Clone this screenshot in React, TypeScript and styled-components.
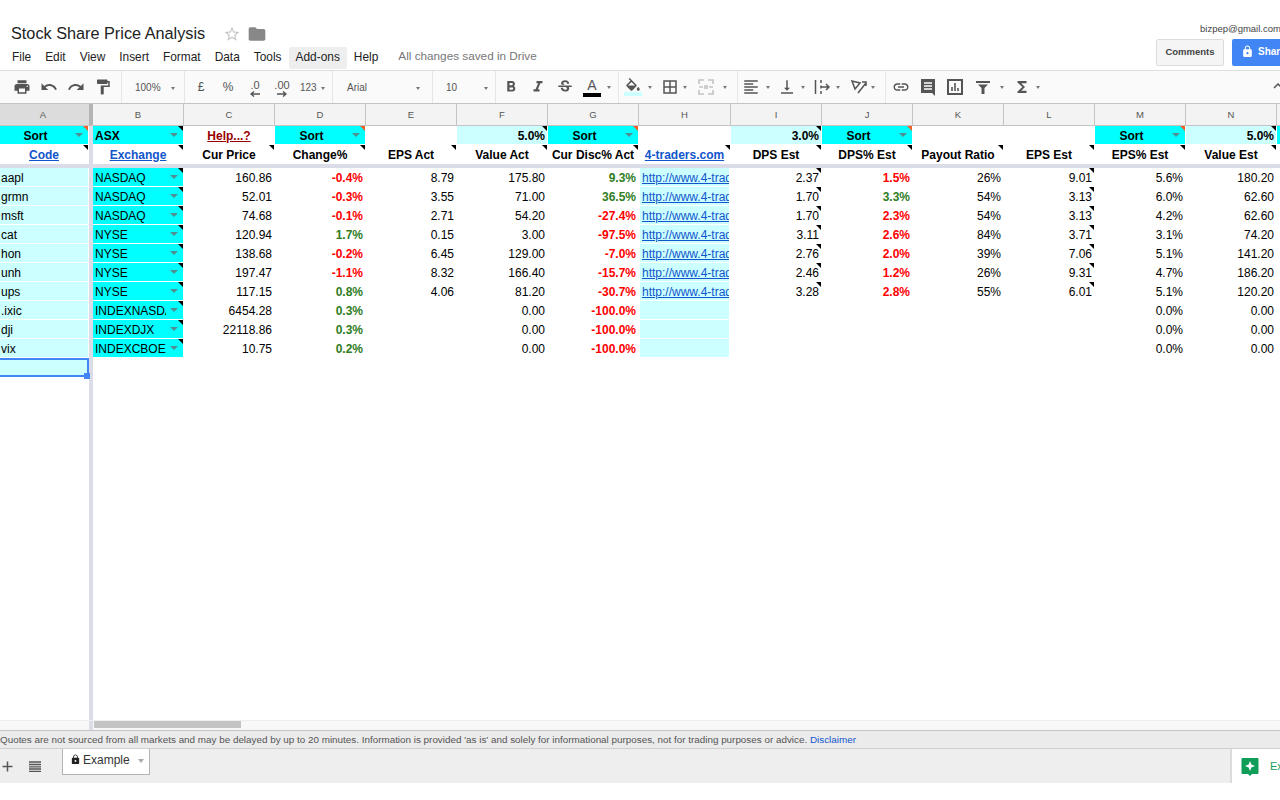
import { FC, ReactNode } from 'react'
import styled, { createGlobalStyle } from 'styled-components'
import {
	MdFolder,
	MdFormatAlignLeft,
	MdFormatBold,
	MdFormatColorFill,
	MdFormatItalic,
	MdFormatPaint,
	MdBorderAll,
	MdFunctions,
	MdLink,
	MdLock,
	MdPrint,
	MdRedo,
	MdStarBorder,
	MdStrikethroughS,
	MdUndo,
	MdVerticalAlignBottom,
} from 'react-icons/md'

const GlobalStyle = createGlobalStyle`
	html, body {
		margin: 0;
		padding: 0;
		background: #fff;
		font-family: 'Liberation Sans', Arial, sans-serif;
	}
`

const CYAN = '#00ffff'
const PALE = '#ccffff'
const GREEN = '#2f7d1f'
const RED = '#ff0000'

const COLUMNS = ['A', 'B', 'C', 'D', 'E', 'F', 'G', 'H', 'I', 'J', 'K', 'L', 'M', 'N', 'O']
const MENUS = ['File', 'Edit', 'View', 'Insert', 'Format', 'Data', 'Tools', 'Add-ons', 'Help']

type Stock = {
	code: string
	exchange: string
	price: string
	change: string
	epsAct?: string
	valueAct: string
	disc: string
	link?: boolean
	dps?: string
	dpsPct?: string
	payout?: string
	epsEst?: string
	epsPct: string
	valueEst: string
}

const STOCKS: Stock[] = [
	{ code: 'aapl', exchange: 'NASDAQ', price: '160.86', change: '-0.4%', epsAct: '8.79', valueAct: '175.80', disc: '9.3%', link: true, dps: '2.37', dpsPct: '1.5%', payout: '26%', epsEst: '9.01', epsPct: '5.6%', valueEst: '180.20' },
	{ code: 'grmn', exchange: 'NASDAQ', price: '52.01', change: '-0.3%', epsAct: '3.55', valueAct: '71.00', disc: '36.5%', link: true, dps: '1.70', dpsPct: '3.3%', payout: '54%', epsEst: '3.13', epsPct: '6.0%', valueEst: '62.60' },
	{ code: 'msft', exchange: 'NASDAQ', price: '74.68', change: '-0.1%', epsAct: '2.71', valueAct: '54.20', disc: '-27.4%', link: true, dps: '1.70', dpsPct: '2.3%', payout: '54%', epsEst: '3.13', epsPct: '4.2%', valueEst: '62.60' },
	{ code: 'cat', exchange: 'NYSE', price: '120.94', change: '1.7%', epsAct: '0.15', valueAct: '3.00', disc: '-97.5%', link: true, dps: '3.11', dpsPct: '2.6%', payout: '84%', epsEst: '3.71', epsPct: '3.1%', valueEst: '74.20' },
	{ code: 'hon', exchange: 'NYSE', price: '138.68', change: '-0.2%', epsAct: '6.45', valueAct: '129.00', disc: '-7.0%', link: true, dps: '2.76', dpsPct: '2.0%', payout: '39%', epsEst: '7.06', epsPct: '5.1%', valueEst: '141.20' },
	{ code: 'unh', exchange: 'NYSE', price: '197.47', change: '-1.1%', epsAct: '8.32', valueAct: '166.40', disc: '-15.7%', link: true, dps: '2.46', dpsPct: '1.2%', payout: '26%', epsEst: '9.31', epsPct: '4.7%', valueEst: '186.20' },
	{ code: 'ups', exchange: 'NYSE', price: '117.15', change: '0.8%', epsAct: '4.06', valueAct: '81.20', disc: '-30.7%', link: true, dps: '3.28', dpsPct: '2.8%', payout: '55%', epsEst: '6.01', epsPct: '5.1%', valueEst: '120.20' },
	{ code: '.ixic', exchange: 'INDEXNASDAQ', price: '6454.28', change: '0.3%', valueAct: '0.00', disc: '-100.0%', epsPct: '0.0%', valueEst: '0.00' },
	{ code: 'dji', exchange: 'INDEXDJX', price: '22118.86', change: '0.3%', valueAct: '0.00', disc: '-100.0%', epsPct: '0.0%', valueEst: '0.00' },
	{ code: 'vix', exchange: 'INDEXCBOE', price: '10.75', change: '0.2%', valueAct: '0.00', disc: '-100.0%', epsPct: '0.0%', valueEst: '0.00' },
]

const signColor = (value?: string) => (value?.startsWith('-') ? RED : GREEN)

const Tool: FC<{ w?: number; gap?: number; caret?: boolean; children: ReactNode }> = ({ w = 27, gap, caret, children }) => (
	<ToolButton $w={w}>
		<ToolIcon>{children}</ToolIcon>
		{caret && <ToolCaret $gap={gap ?? 5} />}
	</ToolButton>
)

const Picker: FC<{ w: number; left: number; caretAt: number; label: string }> = ({ w, left, caretAt, label }) => (
	<PickerBox $w={w} $left={left}>
		<span>{label}</span>
		<PickerCaret $right={caretAt} />
	</PickerBox>
)

const Sort: FC = () => (
	<>
		<SortLabel>Sort</SortLabel>
		<DropArrow />
		<Corner $color="#f4602a" />
	</>
)

const App: FC = () => {
	return (
		<>
			<GlobalStyle />
			<Page>
				<Header>
					<HeaderLeft>
						<TitleRow>
							<Title>Stock Share Price Analysis</Title>
							<StarIcon><MdStarBorder size={18} /></StarIcon>
							<FolderIcon><MdFolder size={20} /></FolderIcon>
						</TitleRow>
						<MenuRow>
							{MENUS.map((m) => (
								<MenuItem key={m} $active={m === 'Add-ons'}>{m}</MenuItem>
							))}
							<SavedNote>All changes saved in Drive</SavedNote>
						</MenuRow>
					</HeaderLeft>
					<HeaderRight>
						<Email>bizpep@gmail.com</Email>
						<HeaderButtons>
							<CommentsButton>Comments</CommentsButton>
							<ShareButton><MdLock size={13} />Share</ShareButton>
						</HeaderButtons>
					</HeaderRight>
				</Header>

				<Toolbar>
					<Tool><MdPrint size={18} /></Tool>
					<Tool><MdUndo size={18} /></Tool>
					<Tool><MdRedo size={18} /></Tool>
					<Tool><MdFormatPaint size={18} /></Tool>
					<ToolSep $ml={4} />
					<Picker w={62} left={13} caretAt={9} label="100%" />
					<ToolSep />
					<ToolSpacer $w={3} />
					<Tool><ToolText $size={12}>£</ToolText></Tool>
					<Tool><ToolText $size={12}>%</ToolText></Tool>
					<Tool>
						<DecimalBox>
							<ToolText $size={11}>.0</ToolText>
							<svg width="10" height="6" viewBox="0 0 10 6"><path d="M10 3H2M4 0.5L1 3l3 2.5" fill="none" stroke="#555" strokeWidth="1.4" /></svg>
						</DecimalBox>
					</Tool>
					<Tool>
						<DecimalBox>
							<ToolText $size={11}>.00</ToolText>
							<svg width="10" height="6" viewBox="0 0 10 6"><path d="M0 3h8M6 0.5L9 3 6 5.5" fill="none" stroke="#555" strokeWidth="1.4" /></svg>
						</DecimalBox>
					</Tool>
					<Picker w={36} left={4} caretAt={7} label="123" />
					<ToolSep />
					<Picker w={99} left={14} caretAt={12} label="Arial" />
					<ToolSep />
					<Picker w={62} left={13} caretAt={7} label="10" />
					<ToolSep />
					<ToolSpacer $w={2} />
					<Tool><MdFormatBold size={20} /></Tool>
					<Tool><MdFormatItalic size={18} /></Tool>
					<Tool><MdStrikethroughS size={18} /></Tool>
					<Tool w={39} caret gap={6}>
						<ColorLetter>A</ColorLetter>
					</Tool>
					<ToolSep />
					<ToolSpacer $w={1} />
					<Tool w={37} caret gap={6}>
						<FillIcon>
							<MdFormatColorFill size={18} />
							<FillBar />
						</FillIcon>
					</Tool>
					<Tool w={36} caret gap={4}><MdBorderAll size={18} /></Tool>
					<Tool w={44} caret gap={8}>
						<svg width="18" height="18" viewBox="0 0 18 18" fill="none" stroke="#c4c4c4" strokeWidth="1.6">
							<path d="M2 6V2h5M11 2h5v4M2 12v4h5M11 16h5v-4M2 9h4M12 9h4M8 7v4M10 7v4" />
						</svg>
					</Tool>
					<ToolSep />
					<Tool w={36} caret gap={6}><MdFormatAlignLeft size={18} /></Tool>
					<Tool w={35} caret gap={5}><MdVerticalAlignBottom size={18} /></Tool>
					<Tool w={37} caret gap={5}>
						<svg width="18" height="18" viewBox="0 0 18 18" fill="none" stroke="#555" strokeWidth="1.5">
							<path d="M2.500 2v14M8 2v3M8 7.500v3M8 13v3M8 9h8M13 6l3 3-3 3" />
						</svg>
					</Tool>
					<Tool w={39} caret gap={3}>
						<svg width="18" height="18" viewBox="0 0 18 18" fill="none" stroke="#555" strokeWidth="1.5">
							<path d="M2 3l8 2-5 6zM8 15L16 5M12 4h4v4" />
						</svg>
					</Tool>
					<ToolSep />
					<ToolSpacer $w={2} />
					<Tool><MdLink size={20} /></Tool>
					<Tool>
						<svg width="18" height="18" viewBox="0 0 18 18">
							<path d="M2 1h14v17l-3-3H2z" fill="#555" />
							<path d="M5 5h8M5 8h8M5 11h8" stroke="#fff" strokeWidth="1.4" />
						</svg>
					</Tool>
					<Tool w={28}>
						<svg width="18" height="18" viewBox="0 0 18 18">
							<rect x="2" y="2" width="14" height="14" fill="none" stroke="#555" strokeWidth="2" />
							<path d="M6 13V9M9 13V5M12 13v-3" stroke="#555" strokeWidth="1.6" />
						</svg>
					</Tool>
					<Tool w={39} caret gap={8}>
						<svg width="18" height="18" viewBox="0 0 18 18">
							<path d="M2 3h14v2H2zM4 6.500h10L10.500 10v6h-3v-6z" fill="#555" />
						</svg>
					</Tool>
					<Tool w={39} caret gap={5}><MdFunctions size={20} /></Tool>
					<CollapseArrow>
						<svg width="10" height="6" viewBox="0 0 10 6"><path d="M1 5l4-4 4 4" fill="none" stroke="#555" strokeWidth="1.5" /></svg>
					</CollapseArrow>
				</Toolbar>

				<Sheet>
					<ColumnHeads>
						{COLUMNS.map((c) => (
							<ColHead key={c} $col={c}>{c}</ColHead>
						))}
					</ColumnHeads>

					<Row>
						<Cell $bg={CYAN} $center $bold><Sort /></Cell>
						<FreezeBar />
						<Cell $bg={CYAN} $bold>ASX<DropArrow /><Corner /></Cell>
						<Cell $center><HelpLink>Help...?</HelpLink></Cell>
						<Cell $bg={CYAN} $center $bold><Sort /></Cell>
						<Cell />
						<Cell $bg={PALE} $right $bold>5.0%<Corner /></Cell>
						<Cell $bg={CYAN} $center $bold><Sort /></Cell>
						<Cell />
						<Cell $bg={PALE} $right $bold>3.0%<Corner /></Cell>
						<Cell $bg={CYAN} $center $bold><Sort /></Cell>
						<Cell />
						<Cell />
						<Cell $bg={CYAN} $center $bold><Sort /></Cell>
						<Cell $bg={PALE} $right $bold>5.0%<Corner /></Cell>
						<Cell $bg={CYAN} />
					</Row>

					<Row>
						<Cell $center><BoldLink>Code</BoldLink><Corner /></Cell>
						<FreezeBar />
						<Cell $center><BoldLink>Exchange</BoldLink><Corner /></Cell>
						<Cell $center $bold>Cur Price<Corner /></Cell>
						<Cell $center $bold>Change%<Corner /></Cell>
						<Cell $center $bold>EPS Act<Corner /></Cell>
						<Cell $center $bold>Value Act<Corner /></Cell>
						<Cell $center $bold>Cur Disc% Act<Corner /></Cell>
						<Cell $center><BoldLink>4-traders.com</BoldLink><Corner /></Cell>
						<Cell $center $bold>DPS Est<Corner /></Cell>
						<Cell $center $bold>DPS% Est<Corner /></Cell>
						<Cell $center $bold>Payout Ratio<Corner /></Cell>
						<Cell $center $bold>EPS Est<Corner /></Cell>
						<Cell $center $bold>EPS% Est<Corner /></Cell>
						<Cell $center $bold>Value Est<Corner /></Cell>
						<Cell />
					</Row>

					<FreezeBand />

					{STOCKS.map((s) => (
						<Row key={s.code}>
							<CodeCell $bg={PALE}>{s.code}</CodeCell>
							<FreezeBar />
							<Cell $bg={CYAN}>
								<ClippedText>{s.exchange}</ClippedText>
								<DropArrow />
								<Corner />
							</Cell>
							<Cell $right>{s.price}</Cell>
							<Cell $right $bold $color={signColor(s.change)}>{s.change}</Cell>
							<Cell $right>{s.epsAct}</Cell>
							<Cell $right>{s.valueAct}</Cell>
							<Cell $right $bold $color={signColor(s.disc)}>{s.disc}</Cell>
							<LinkCell $bg={PALE}>{s.link && <PlainLink>http://www.4-traders.com/</PlainLink>}</LinkCell>
							<Cell $right>{s.dps}{s.dps && <Corner />}</Cell>
							<Cell $right $bold $color={s.dpsPct === '3.3%' ? GREEN : RED}>{s.dpsPct}</Cell>
							<Cell $right>{s.payout}</Cell>
							<Cell $right>{s.epsEst}{s.epsEst && <Corner />}</Cell>
							<Cell $right>{s.epsPct}</Cell>
							<Cell $right>{s.valueEst}</Cell>
							<Cell />
						</Row>
					))}

					<Row>
						<SelectedCell><FillHandle /></SelectedCell>
						<FreezeBar />
					</Row>

					<EmptyArea>
						<div />
						<FreezeBar />
					</EmptyArea>

					<ScrollTrack>
						<ScrollLeft />
						<FreezeBar />
						<ScrollThumb />
					</ScrollTrack>
				</Sheet>

				<Notice>
					Quotes are not sourced from all markets and may be delayed by up to 20 minutes. Information is provided 'as is' and solely for informational purposes, not for trading purposes or advice.{' '}
					<NoticeLink>Disclaimer</NoticeLink>
				</Notice>

				<TabBar>
					<TabIcons>
						<AddSheet>
							<svg width="11" height="11" viewBox="0 0 11 11"><path d="M5.5 0.5v10M0.5 5.5h10" stroke="#555" strokeWidth="1.5" /></svg>
						</AddSheet>
						<ListSheets>
							<svg width="12" height="11" viewBox="0 0 12 11"><path d="M0 1h12M0 3.5h12M0 5.8h12M0 8h12M0 10.300h12" stroke="#555" strokeWidth="1.3" /></svg>
						</ListSheets>
					</TabIcons>
					<SheetTab>
						<MdLock size={11} color="#222" />
						<span>Example</span>
						<TabCaret />
					</SheetTab>
					<Explore>
						<ExploreIcon width="18" height="19" viewBox="0 0 18 19">
							<path d="M1.5 1h15a1 1 0 0 1 1 1v14a1 1 0 0 1-1 1H11l-2 2-2-2H1.5a1 1 0 0 1-1-1V2a1 1 0 0 1 1-1z" fill="#0f9d58" />
							<path d="M9 4l1.4 3.600L14 9l-3.600 1.400L9 14l-1.400-3.600L4 9l3.600-1.400z" fill="#fff" />
						</ExploreIcon>
						<ExploreLabel>Explore</ExploreLabel>
					</Explore>
				</TabBar>
			</Page>
		</>
	)
}

const Page = styled.div`
	width: 1280px;
	height: 800px;
	display: flex;
	flex-direction: column;
	overflow: hidden;
	background: #fff;
	color: #000;
	font-family: 'Liberation Sans', Arial, sans-serif;
`

const Header = styled.div`
	height: 70px;
	flex: none;
	display: flex;
	justify-content: space-between;
	box-sizing: border-box;
`

const HeaderLeft = styled.div`
	padding: 22px 0 0 5px;
`

const TitleRow = styled.div`
	display: flex;
	align-items: center;
	height: 23px;
	padding-left: 6px;
`

const Title = styled.div`
	font-size: 16.25px;
	color: #222;
	width: 212px;
	white-space: nowrap;
`

const StarIcon = styled.span`
	display: flex;
	color: #c8c8c8;
	width: 24px;
`

const FolderIcon = styled.span`
	display: flex;
	color: #888;
`

const MenuRow = styled.div`
	display: flex;
	align-items: center;
	height: 23px;
	margin-top: 1px;
`

const MenuItem = styled.div<{ $active?: boolean }>`
	font-size: 11.9px;
	color: #222;
	padding: 0 7px;
	height: 22px;
	line-height: 21px;
	border-radius: 2px;
	background: ${({ $active }) => ($active ? '#eeeeee' : 'transparent')};
`

const SavedNote = styled.div`
	font-size: 11.75px;
	color: #777;
	margin-left: 13px;
	margin-top: -4px;
	white-space: nowrap;
`

const HeaderRight = styled.div`
	width: 154px;
	flex: none;
	margin-right: -30px;
	padding-top: 23px;
`

const Email = styled.div`
	font-size: 9.5px;
	line-height: 12px;
	color: #444;
	padding-left: 44px;
	white-space: nowrap;
`

const HeaderButtons = styled.div`
	display: flex;
	gap: 8px;
	margin-top: 4px;
`

const CommentsButton = styled.div`
	width: 68px;
	height: 27px;
	box-sizing: border-box;
	border: 1px solid #dcdcdc;
	border-radius: 2px;
	background: #f5f5f5;
	padding-bottom: 2px;
	font-size: 9.5px;
	font-weight: bold;
	color: #444;
	display: flex;
	align-items: center;
	justify-content: center;
`

const ShareButton = styled.div`
	width: 78px;
	height: 27px;
	box-sizing: border-box;
	border-radius: 2px;
	background: #4285f4;
	color: #fff;
	font-size: 10px;
	font-weight: bold;
	display: flex;
	align-items: center;
	gap: 4px;
	padding: 0 0 2px 9px;
`

const Toolbar = styled.div`
	height: 34px;
	flex: none;
	box-sizing: border-box;
	display: flex;
	align-items: center;
	padding-left: 9px;
	background: #fafafa;
	border-top: 1px solid #dedede;
	border-bottom: 1px solid #c4c4c4;
	position: relative;
`

const ToolButton = styled.div<{ $w: number }>`
	width: ${({ $w }) => $w}px;
	flex: none;
	height: 24px;
	display: flex;
	align-items: center;
	padding-left: 4px;
	box-sizing: border-box;
`

const ToolIcon = styled.span`
	width: 18px;
	height: 18px;
	flex: none;
	display: flex;
	align-items: center;
	justify-content: center;
	color: #555;
`

const ToolCaret = styled.span<{ $gap: number }>`
	margin-left: ${({ $gap }) => $gap}px;
	border-left: 2.5px solid transparent;
	border-right: 2.5px solid transparent;
	border-top: 3px solid #777;
`

const ToolSep = styled.div<{ $ml?: number }>`
	width: 1px;
	height: 32px;
	flex: none;
	background: #e6e6e6;
	margin-left: ${({ $ml }) => $ml ?? 0}px;
`

const ToolSpacer = styled.div<{ $w: number }>`
	width: ${({ $w }) => $w}px;
	flex: none;
`

const ToolText = styled.span<{ $size: number }>`
	font-size: ${({ $size }) => $size}px;
	line-height: 11px;
	color: #555;
`

const DecimalBox = styled.span`
	display: flex;
	flex-direction: column;
	align-items: center;
	margin-top: 2px;
`

const PickerBox = styled.div<{ $w: number; $left: number }>`
	width: ${({ $w }) => $w}px;
	flex: none;
	position: relative;
	box-sizing: border-box;
	padding-left: ${({ $left }) => $left}px;
	font-size: 10px;
	color: #555;
`

const PickerCaret = styled.span<{ $right: number }>`
	position: absolute;
	right: ${({ $right }) => $right}px;
	top: 5px;
	border-left: 2.5px solid transparent;
	border-right: 2.5px solid transparent;
	border-top: 3px solid #777;
`

const ColorLetter = styled.span`
	font-size: 14px;
	line-height: 15px;
	font-weight: normal;
	color: #555;
	width: 18px;
	text-align: center;
	border-bottom: 4px solid #000;
`

const FillIcon = styled.span`
	display: flex;
	flex-direction: column;
	align-items: center;
	height: 18px;
	position: relative;
`

const FillBar = styled.span`
	position: absolute;
	left: 0;
	right: 0;
	bottom: 0;
	height: 4px;
	background: ${PALE};
`

const CollapseArrow = styled.div`
	position: absolute;
	right: -3px;
	top: 12px;
	display: flex;
`

const Sheet = styled.div`
	flex: 1;
	min-height: 0;
	display: flex;
	flex-direction: column;
	overflow: hidden;
`

const Row = styled.div`
	display: grid;
	grid-template-columns: 89px 4px repeat(6, 91px) 92px repeat(7, 91px);
	height: 19px;
	flex: none;
`

const ColumnHeads = styled.div`
	height: 22px;
	flex: none;
	display: grid;
	grid-template-columns: 93px repeat(6, 91px) 92px repeat(7, 91px);
	box-sizing: border-box;
	border-bottom: 1px solid #c4c4c4;
`

const ColHead = styled.div<{ $col: string }>`
	box-sizing: border-box;
	background: ${({ $col }) => ($col === 'A' ? '#dcdcdc' : '#f3f3f3')};
	border-right: ${({ $col }) => ($col === 'A' ? '4px solid #b4b4b4' : '1px solid #c4c4c4')};
	padding-right: ${({ $col }) => ($col === 'A' ? 3 : 0)}px;
	font-size: 9.5px;
	color: #555;
	text-align: center;
	line-height: 21px;
`

const Cell = styled.div<{ $bg?: string; $center?: boolean; $right?: boolean; $bold?: boolean; $color?: string }>`
	position: relative;
	box-sizing: border-box;
	height: 19px;
	padding: 0 2px;
	background: ${({ $bg }) => $bg ?? '#fff'};
	border-right: 1px solid #fff;
	border-bottom: 1px solid #fff;
	color: ${({ $color }) => $color ?? '#000'};
	font-size: 12px;
	line-height: 21px;
	font-weight: ${({ $bold }) => ($bold ? 'bold' : 'normal')};
	text-align: ${({ $center, $right }) => ($center ? 'center' : $right ? 'right' : 'left')};
	white-space: nowrap;
	overflow: visible;
`

const CodeCell = styled(Cell)`
	padding-left: 1px;
`

const LinkCell = styled(Cell)`
	border-left: 1px solid #fff;
	border-right: 2px solid #fff;
	padding: 0 0 0 1px;
`

const SortLabel = styled.span`
	display: block;
	padding-right: 17px;
`

const ClippedText = styled.div`
	width: 71px;
	overflow: hidden;
`

const DropArrow = styled.span`
	position: absolute;
	right: 5px;
	top: 7px;
	border-left: 4px solid transparent;
	border-right: 4px solid transparent;
	border-top: 4px solid #4f8f8f;
`

const Corner = styled.span<{ $color?: string }>`
	position: absolute;
	right: 0;
	top: 0;
	width: 0;
	height: 0;
	border-left: 5px solid transparent;
	border-top: 5px solid ${({ $color }) => $color ?? '#000'};
`

const HelpLink = styled.span`
	color: #980000;
	font-weight: bold;
	text-decoration: underline;
`

const BoldLink = styled.span`
	color: #1155cc;
	font-weight: bold;
	text-decoration: underline;
`

const PlainLink = styled.div`
	color: #1155cc;
	text-decoration: underline;
	overflow: hidden;
	padding-left: 1px;
`

const FreezeBar = styled.div`
	width: 4px;
	background: #dadde8;
`

const FreezeBand = styled.div`
	height: 4px;
	flex: none;
	background: #dadde8;
`

const SelectedCell = styled.div`
	position: relative;
	box-sizing: border-box;
	height: 19px;
	background: ${PALE};
	border-top: 2px solid #4285f4;
	border-right: 2px solid #4285f4;
	border-bottom: 2px solid #4285f4;
`

const FillHandle = styled.span`
	position: absolute;
	right: -3px;
	bottom: -4px;
	width: 6px;
	height: 6px;
	background: #4285f4;
`

const EmptyArea = styled.div`
	flex: 1;
	min-height: 0;
	display: grid;
	grid-template-columns: 89px 4px;
`

const ScrollTrack = styled.div`
	height: 10px;
	flex: none;
	box-sizing: border-box;
	display: flex;
	align-items: stretch;
	background: #f8f8f8;
	border-top: 1px solid #eeeeee;
`

const ScrollLeft = styled.div`
	width: 89px;
`

const ScrollThumb = styled.div`
	width: 147px;
	height: 7px;
	margin-left: 1px;
	background: #c4c4c4;
`

const Notice = styled.div`
	height: 19px;
	flex: none;
	box-sizing: border-box;
	background: #ebebeb;
	border-top: 1px solid #c4c4c4;
	border-bottom: 1px solid #cfcfcf;
	font-size: 9.87px;
	line-height: 18px;
	color: #555;
	white-space: nowrap;
`

const NoticeLink = styled.span`
	color: #1155cc;
`

const TabBar = styled.div`
	height: 34px;
	flex: none;
	display: flex;
	background: #eeeeee;
	margin-bottom: 17px;
`

const TabIcons = styled.div`
	width: 62px;
	flex: none;
	display: flex;
	align-items: center;
	padding-top: 1px;
`

const AddSheet = styled.div`
	width: 29px;
	padding-left: 2px;
	box-sizing: border-box;
	display: flex;
`

const ListSheets = styled.div`
	display: flex;
`

const SheetTab = styled.div`
	width: 88px;
	height: 26px;
	flex: none;
	box-sizing: border-box;
	background: #fff;
	border: 1px solid #b4b4b4;
	border-top: 0;
	display: flex;
	align-items: center;
	padding: 0 0 4px 7px;
	gap: 2px;
	font-size: 12px;
	color: #333;
	position: relative;
`

const TabCaret = styled.span`
	position: absolute;
	right: 5px;
	top: 10px;
	border-left: 3.5px solid transparent;
	border-right: 3.5px solid transparent;
	border-top: 4px solid #aaa;
`

const Explore = styled.div`
	width: 50px;
	margin-left: auto;
	flex: none;
	box-sizing: border-box;
	background: #fff;
	border-left: 2px solid #dcdcdc;
	display: flex;
	align-items: center;
	padding: 0 0 0 9px;
	gap: 11px;
	overflow: hidden;
`

const ExploreIcon = styled.svg`
	flex: none;
`

const ExploreLabel = styled.span`
	flex: none;
	font-size: 11px;
	color: #0f9d58;
`

export default App
